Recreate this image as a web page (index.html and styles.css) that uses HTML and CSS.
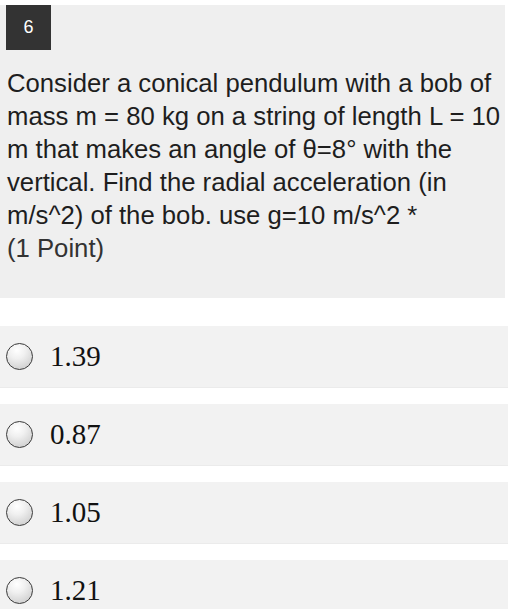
FILE: index.html
```html
<!DOCTYPE html>
<html>
<head>
<meta charset="utf-8">
<link rel="stylesheet" href="styles.css">
</head>
<body>
<div class="question">
  <div class="badge">6</div>
  <div class="qtext">Consider a conical pendulum with a bob of mass m = 80 kg on a string of length L = 10 m that makes an angle of θ=8° with the vertical. Find the radial acceleration (in m/s^2) of the bob. use g=10 m/s^2 *</div>
  <div class="points">(1 Point)</div>
</div>
<div class="options">
  <div class="option"><span class="radio"></span><span class="label">1.39</span></div>
  <div class="option"><span class="radio"></span><span class="label">0.87</span></div>
  <div class="option"><span class="radio"></span><span class="label">1.05</span></div>
  <div class="option"><span class="radio"></span><span class="label">1.21</span></div>
</div>
</body>
</html>
```
FILE: styles.css
```css
html, body {
  margin: 0;
  padding: 0;
  background: #ffffff;
  overflow: hidden;
}
body {
  font-family: "Liberation Sans", Arial, sans-serif;
}
.question {
  margin-top: 5px;
  margin-right: 3px;
  background: #efefef;
  height: 293px;
  box-sizing: border-box;
  display: flex;
  flex-direction: column;
}
.badge {
  margin-left: 6px;
  width: 45px;
  height: 45px;
  background: #333333;
  color: #ffffff;
  font-size: 18px;
  display: flex;
  align-items: center;
  justify-content: center;
}
.qtext {
  margin-top: 17px;
  padding: 0 0 0 7px;
  font-size: 25.7px;
  line-height: 33px;
  color: #1e1e1e;
}
.points {
  padding-left: 7px;
  font-size: 25.7px;
  line-height: 33px;
  color: #333333;
}
.options {
  margin-top: 28px;
  display: flex;
  flex-direction: column;
  gap: 16px;
}
.option {
  height: 62px;
  background: #f2f2f2;
  display: flex;
  align-items: center;
  border-bottom: 1px solid #ebebeb;
  box-sizing: border-box;
}
.radio {
  margin-left: 6px;
  width: 27px;
  height: 27px;
  box-sizing: border-box;
  border-radius: 50%;
  border: 1.5px solid #3a3a3a;
  background: radial-gradient(circle at 40% 25%, #ffffff 0%, #f0f0f0 35%, #c4c4c4 100%);
  flex: none;
}
.label {
  margin-left: 17px;
  font-family: "Liberation Serif", "Times New Roman", serif;
  font-size: 29px;
  color: #111111;
}
```
